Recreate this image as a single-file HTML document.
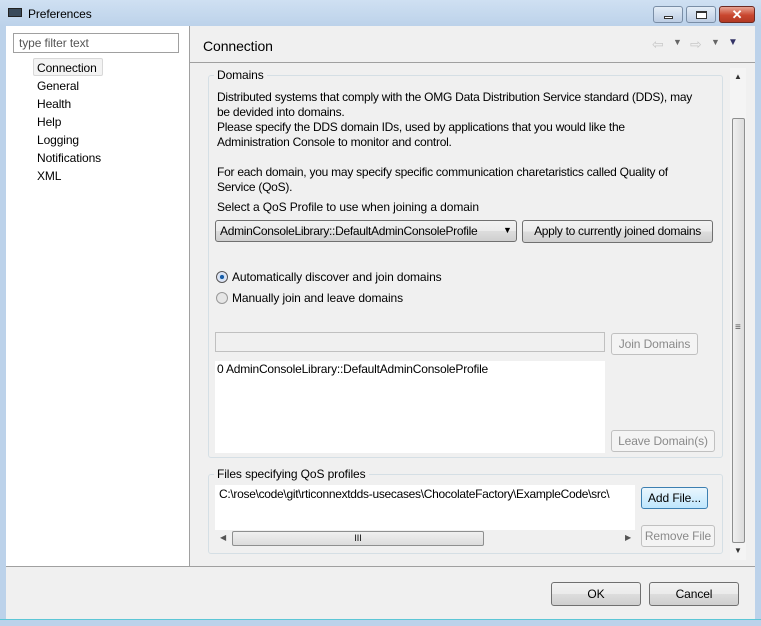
<!DOCTYPE html>
<html><head><style>
*{box-sizing:border-box;margin:0;padding:0}
body{width:761px;height:626px;overflow:hidden;background:#bcd2ea;font-family:"Liberation Sans",sans-serif;font-size:12px;color:#000;position:relative;letter-spacing:-0.1px}
.a{position:absolute}
.btn{position:absolute;border:1px solid #707070;border-radius:3px;background:linear-gradient(#f2f2f2,#ebebeb 50%,#dddddd 51%,#cfcfcf);text-align:center;line-height:20px;font-size:12px;white-space:nowrap;overflow:hidden}
.dis{border-color:#c0c0c0;background:#f4f4f4;color:#8a8a8a}
.grp{position:absolute;border:1px solid #d5dfe5;border-radius:3px}
.lbl{position:absolute;background:#f0f0f0;padding:0 3px}
</style></head><body>
<div class="a" style="left:0;top:0;width:761px;height:26px;background:linear-gradient(#cfe0f2,#bcd2ea)"></div>
<div class="a" style="left:8px;top:8px;width:14px;height:9px;background:#3a4a5a;border:1px solid #222"></div>
<div class="a" style="left:28px;top:7px;font-size:12px">Preferences</div>
<div class="a" style="left:653px;top:6px;width:30px;height:17px;border:1px solid #7a8ea6;border-radius:3px;background:linear-gradient(#e4edf7,#bccde3)"><div class="a" style="left:10px;top:9px;width:9px;height:3px;background:#fff;border:1px solid #333"></div></div>
<div class="a" style="left:686px;top:6px;width:30px;height:17px;border:1px solid #7a8ea6;border-radius:3px;background:linear-gradient(#e4edf7,#bccde3)"><div class="a" style="left:9px;top:4px;width:11px;height:8px;background:#fff;border:1px solid #333;border-top-width:2px"></div></div>
<div class="a" style="left:719px;top:6px;width:36px;height:17px;border:1px solid #6d2a22;border-radius:3px;background:linear-gradient(#e8a493,#c9462f 55%,#b23a24);color:#fff;font-weight:bold;text-align:center;line-height:15px;font-size:13px">✕</div>
<div class="a" style="left:6px;top:26px;width:749px;height:593px;background:#f0f0f0"></div>
<div class="a" style="left:6px;top:26px;width:183px;height:540px;background:#fff"></div>
<div class="a" style="left:189px;top:26px;width:1px;height:540px;background:#a0a0a0"></div>
<div class="a" style="left:6px;top:566px;width:749px;height:1px;background:#a0a0a0"></div>
<div class="a" style="left:755px;top:26px;width:6px;height:600px;background:#bcd2ea"></div>
<div class="a" style="left:0;top:619px;width:761px;height:7px;background:#bcd2ea;border-top:1px solid #5cc6d6"></div>
<div class="a" style="left:13px;top:33px;width:166px;height:20px;border:1px solid #a0a0a0;background:#fff;color:#555;padding:2px 5px">type filter text</div>
<div class="a" style="left:33px;top:58px;width:70px;height:18px;border:1px solid #d8d8d8;border-radius:2px;background:#f3f3f3"></div>
<div class="a" style="left:37px;top:59px;line-height:18px">Connection<br>General<br>Health<br>Help<br>Logging<br>Notifications<br>XML</div>
<div class="a" style="left:190px;top:26px;width:565px;height:37px;background:#f0f0f0;border-bottom:1px solid #a0a0a0"></div>
<div class="a" style="left:203px;top:38px;font-size:14px">Connection</div>
<div class="a" style="left:652px;top:36px;color:#c8c8c8;font-size:14px">⇦</div>
<div class="a" style="left:673px;top:37px;color:#666;font-size:9px">▼</div>
<div class="a" style="left:690px;top:36px;color:#c8c8c8;font-size:14px">⇨</div>
<div class="a" style="left:711px;top:37px;color:#666;font-size:9px">▼</div>
<div class="a" style="left:728px;top:37px;color:#333366;font-size:10px">▼</div>
<div class="a" style="left:730px;top:68px;width:16px;height:492px;background:#f4f4f4"></div>
<div class="a" style="left:732px;top:118px;width:13px;height:425px;border:1px solid #8e8f8f;border-radius:2px;background:linear-gradient(90deg,#f0f0f0,#dcdcdc)"></div>
<div class="a" style="left:734px;top:72px;font-size:8px;color:#333">▲</div>
<div class="a" style="left:734px;top:546px;font-size:8px;color:#333">▼</div>
<div class="a" style="left:735px;top:322px;font-size:10px;color:#555">≡</div>

<div class="grp" style="left:208px;top:75px;width:515px;height:383px"></div>
<div class="lbl" style="left:214px;top:68px">Domains</div>
<div class="a" style="left:217px;top:90px;line-height:15px;white-space:nowrap;letter-spacing:-0.25px">Distributed systems that comply with the OMG Data Distribution Service standard (DDS), may<br>be devided into domains.<br>Please specify the DDS domain IDs, used by applications that you would like the<br>Administration Console to monitor and control.<br><br>For each domain, you may specify specific communication charetaristics called Quality of<br>Service (QoS).</div>
<div class="a" style="left:217px;top:200px">Select a QoS Profile to use when joining a domain</div>
<div class="btn" style="left:215px;top:220px;width:302px;height:22px;text-align:left;padding-left:4px;letter-spacing:-0.3px">AdminConsoleLibrary::DefaultAdminConsoleProfile</div>
<div class="a" style="left:503px;top:225px;font-size:9px">▼</div>
<div class="btn" style="left:522px;top:220px;width:191px;height:23px;letter-spacing:-0.3px">Apply to currently joined domains</div>
<div class="a" style="left:216px;top:271px;width:12px;height:12px;border-radius:50%;border:1px solid #555;background:radial-gradient(#1a5ea8 28%,#cde 32%,#eef 80%)"></div>
<div class="a" style="left:232px;top:270px">Automatically discover and join domains</div>
<div class="a" style="left:216px;top:292px;width:12px;height:12px;border-radius:50%;border:1px solid #999;background:#e6e6e6"></div>
<div class="a" style="left:232px;top:291px">Manually join and leave domains</div>
<div class="a" style="left:215px;top:332px;width:390px;height:20px;border:1px solid #c0c0c0;background:#f0f0f0"></div>
<div class="btn dis" style="left:611px;top:333px;width:87px;height:22px">Join Domains</div>
<div class="a" style="left:215px;top:361px;width:390px;height:92px;background:#fff;padding:1px 2px;letter-spacing:-0.2px">0 AdminConsoleLibrary::DefaultAdminConsoleProfile</div>
<div class="btn dis" style="left:611px;top:430px;width:104px;height:22px">Leave Domain(s)</div>

<div class="grp" style="left:208px;top:474px;width:515px;height:80px"></div>
<div class="lbl" style="left:214px;top:467px">Files specifying QoS profiles</div>
<div class="a" style="left:215px;top:485px;width:420px;height:45px;background:#fff;padding:2px 4px;white-space:nowrap;overflow:hidden;letter-spacing:-0.3px">C:\rose\code\git\rticonnextdds-usecases\ChocolateFactory\ExampleCode\src\</div>
<div class="a" style="left:215px;top:530px;width:420px;height:17px;background:#f0f0f0"></div>
<div class="a" style="left:220px;top:533px;font-size:8px;color:#555">◀</div>
<div class="a" style="left:232px;top:531px;width:252px;height:15px;border:1px solid #8e8f8f;border-radius:2px;background:linear-gradient(#f0f0f0,#dcdcdc);text-align:center;font-size:9px;line-height:13px">III</div>
<div class="a" style="left:625px;top:533px;font-size:8px;color:#555">▶</div>
<div class="btn" style="left:641px;top:487px;width:67px;height:22px;border-color:#3c7fb1;background:linear-gradient(#eaf6fd,#bee6fd)">Add File...</div>
<div class="btn dis" style="left:641px;top:525px;width:74px;height:22px">Remove File</div>

<div class="btn" style="left:551px;top:582px;width:90px;height:24px;line-height:22px">OK</div>
<div class="btn" style="left:649px;top:582px;width:90px;height:24px;line-height:22px">Cancel</div>
</body></html>
